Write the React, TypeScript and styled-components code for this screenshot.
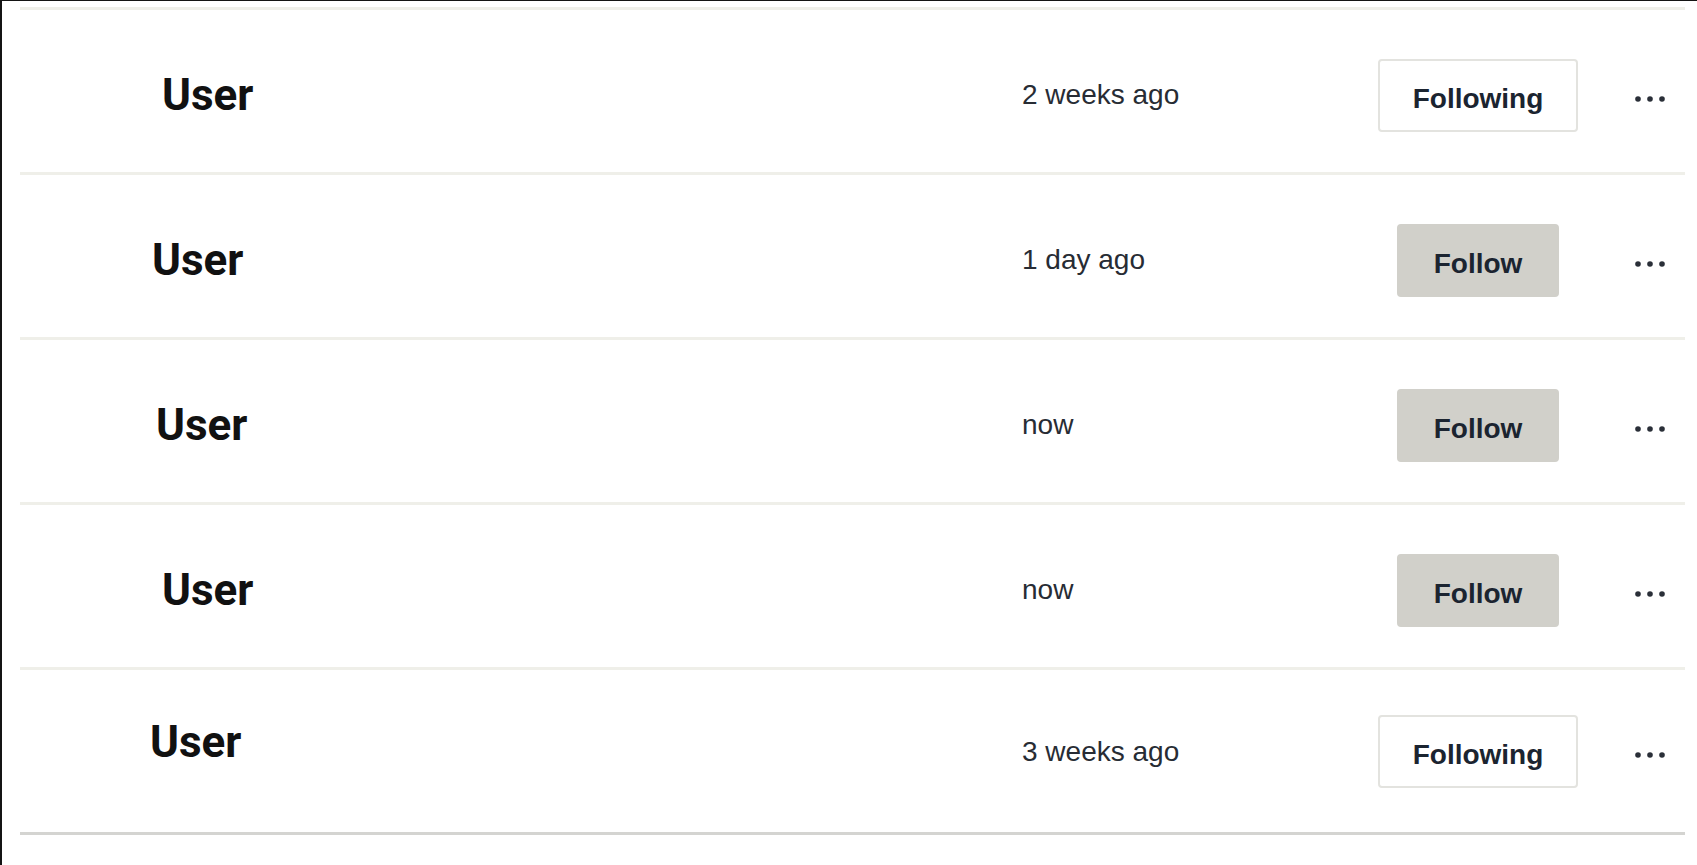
import React from 'react';
import styled, { createGlobalStyle } from 'styled-components';

const GlobalStyle = createGlobalStyle`
  body {
    margin: 0;
    background: #ffffff;
    font-family: 'Liberation Sans', Arial, sans-serif;
  }
`;

const Frame = styled.div`
  box-sizing: border-box;
  min-height: 100vh;
  border-left: 2px solid #141414;
  border-top: 1px solid #141414;
  padding: 6px 0 0 18px;
`;

const List = styled.ul`
  list-style: none;
  margin: 0;
  padding: 0;
  width: 1665px;
  border-top: 3px solid #efefe9;
`;

const Row = styled.li<{ $last?: boolean }>`
  display: grid;
  grid-template-columns: 1002px 346px 220px 1fr;
  align-items: center;
  height: ${p => (p.$last ? 162 : 154)}px;
  padding-top: ${p => (p.$last ? 0 : 8)}px;
  border-bottom: 3px solid ${p => (p.$last ? '#d4d4d1' : '#efefe9')};
`;

const Name = styled.span<{ $indent: number; $lift?: number }>`
  font-family: Roboto, 'Liberation Sans', sans-serif;
  font-weight: 700;
  font-size: 44px;
  line-height: 1;
  color: #111111;
  padding-left: ${p => p.$indent}px;
  margin-bottom: ${p => (p.$lift ?? 0) * 2}px;
`;

const Time = styled.span<{ $drop?: number }>`
  font-size: 28px;
  line-height: 1;
  color: #272c34;
  margin-top: ${p => (p.$drop ?? 0) * 2}px;
`;

const FollowButton = styled.button<{ $following?: boolean }>`
  justify-self: center;
  height: 73px;
  padding: 8px ${p => (p.$following ? 33 : 35)}px 0;
  border: 2px solid ${p => (p.$following ? '#e3e3df' : '#d1d0ca')};
  border-radius: 4px;
  background: ${p => (p.$following ? '#ffffff' : '#d1d0ca')};
  font-family: 'Liberation Sans', Arial, sans-serif;
  font-size: 28px;
  font-weight: 700;
  color: #1b2430;
  cursor: pointer;
`;

const MoreButton = styled.button`
  justify-self: start;
  margin-left: 47px;
  margin-top: 8px;
  padding: 0;
  border: none;
  background: none;
  display: flex;
  cursor: pointer;
`;

const Dots = () => (
  <svg width="30" height="6" viewBox="0 0 30 6">
    <circle cx="3" cy="3" r="2.8" fill="#2a2f38" />
    <circle cx="15" cy="3" r="2.8" fill="#2a2f38" />
    <circle cx="27" cy="3" r="2.8" fill="#2a2f38" />
  </svg>
);

const users = [
  { indent: 142, time: '2 weeks ago', following: true },
  { indent: 132, time: '1 day ago', following: false },
  { indent: 136, time: 'now', following: false },
  { indent: 142, time: 'now', following: false },
  { indent: 130, time: '3 weeks ago', following: true, lift: 9, drop: 1 },
];

const App = () => {
  return (
    <>
      <GlobalStyle />
      <Frame>
        <List>
          {users.map((u, i) => (
            <Row key={i} $last={i === users.length - 1}>
              <Name $indent={u.indent} $lift={u.lift}>User</Name>
              <Time $drop={u.drop}>{u.time}</Time>
              <FollowButton $following={u.following}>
                {u.following ? 'Following' : 'Follow'}
              </FollowButton>
              <MoreButton aria-label="More">
                <Dots />
              </MoreButton>
            </Row>
          ))}
        </List>
      </Frame>
    </>
  );
};

export default App;
